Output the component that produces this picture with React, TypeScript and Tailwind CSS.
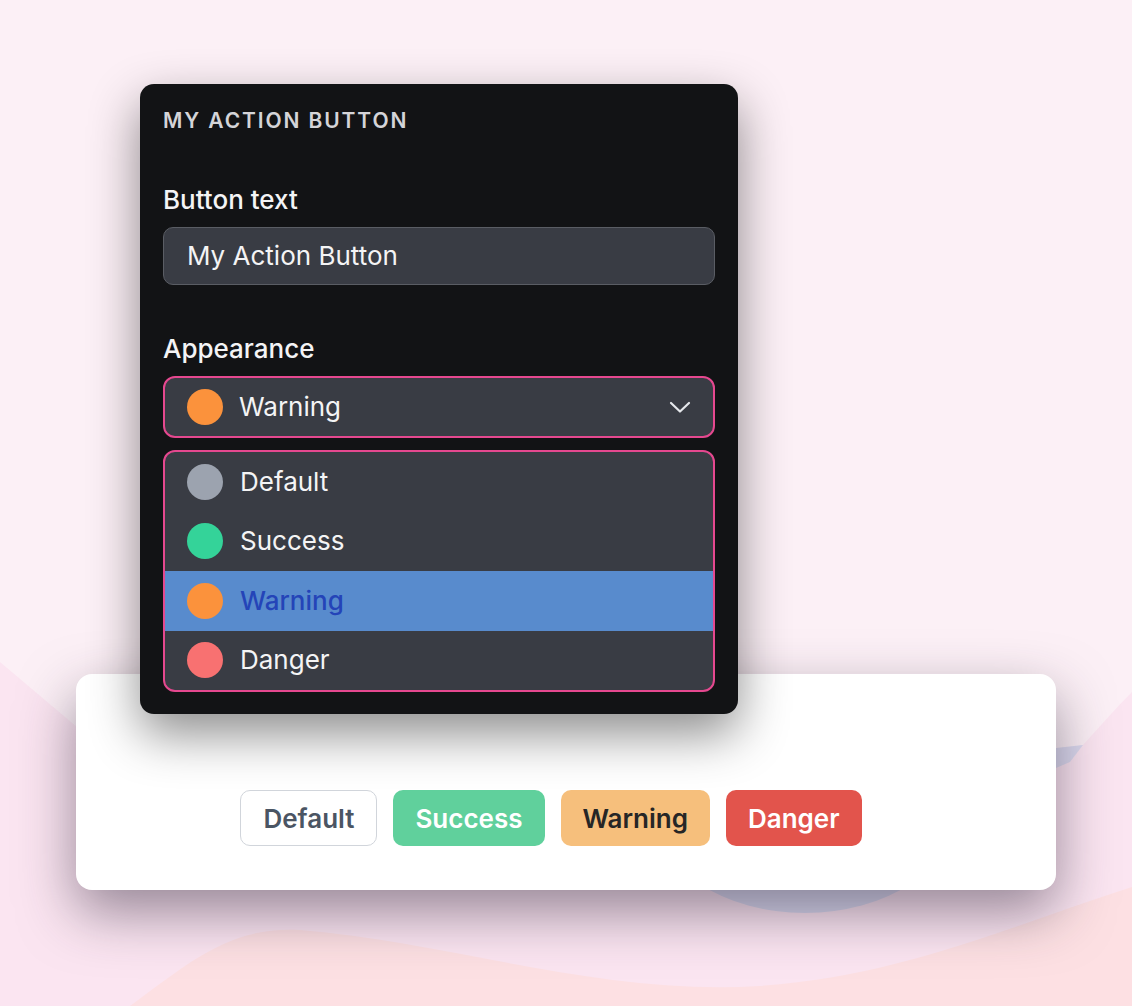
import React from 'react'

const font = { fontFamily: 'Inter, "Noto Sans", sans-serif' }

const options = [
  { label: 'Default', dot: 'bg-[#9ca3af]' },
  { label: 'Success', dot: 'bg-[#34d399]' },
  { label: 'Warning', dot: 'bg-[#fb923c]' },
  { label: 'Danger', dot: 'bg-[#f87171]' },
]

function Backdrop() {
  return (
    <svg className="absolute inset-0 h-full w-full" viewBox="0 0 1132 1006" preserveAspectRatio="none">
      <rect width="1132" height="1006" fill="#fcf0f6" />
      <path d="M0 662 L90 738 Q560 770 1000 762 L1083 745 C1100 726 1116 708 1132 692 V1006 H0 Z" fill="#fbe5f1" />
      <ellipse cx="805" cy="812" rx="150" ry="101" fill="#d9d9ef" />
      <path d="M1056 748 L1083 745 L1070 762 L1056 768 Z" fill="#dcdaef" />
      <path
        d="M130 1006 C190 962 230 926 300 930 C450 942 600 996 760 986 C900 976 1000 930 1132 887 V1006 Z"
        fill="#fde0e3"
      />
    </svg>
  )
}

function Chevron() {
  return (
    <svg width="22" height="13" viewBox="0 0 22 13" fill="none">
      <path d="M2 2 L11 10.5 L20 2" stroke="#e5e7eb" strokeWidth="2.2" strokeLinecap="round" strokeLinejoin="round" />
    </svg>
  )
}

function SettingsPanel() {
  return (
    <div className="absolute left-[64px] top-[-590px] z-10 flex h-[630px] w-[598px] flex-col rounded-[14px] bg-[#121315] px-[23px] pt-[23px] shadow-[0_20px_50px_rgba(0,0,0,0.45)]">
      <div className="text-[21px] font-semibold uppercase leading-[28px] tracking-[0.09em] text-[#d4d4d8]">
        My Action Button
      </div>

      <label className="mt-[49px] text-[26px] font-medium leading-[32px] text-[#f4f4f5]">Button text</label>
      <div className="mt-[11px] flex h-[58px] items-center rounded-[10px] border-[1.5px] border-[#5a5d64] bg-[#393c44] pl-[23px] text-[26px] leading-[32px] text-[#f4f4f5]">
        My Action Button
      </div>

      <label className="mt-[48px] text-[26px] font-medium leading-[32px] text-[#f4f4f5]">Appearance</label>
      <div className="mt-[11px] flex h-[62px] items-center rounded-[12px] border-2 border-[#e5488f] bg-[#393c44] pl-[22px] pr-[22px]">
        <span className="h-9 w-9 shrink-0 rounded-full bg-[#fb923c]" />
        <span className="ml-4 flex-1 text-[26px] leading-[32px] text-[#f4f4f5]">Warning</span>
        <Chevron />
      </div>

      <div className="mt-[12px] overflow-hidden rounded-[12px] border-2 border-[#e5488f] bg-[#393c44]">
        {options.map((o) => {
          const active = o.label === 'Warning'
          return (
            <div
              key={o.label}
              className={
                active
                  ? 'flex h-[59.5px] items-center bg-[#588bcd] pl-[22px]'
                  : 'flex h-[59.5px] items-center pl-[22px]'
              }
            >
              <span className={`h-9 w-9 shrink-0 rounded-full ${o.dot}`} />
              <span
                className={
                  active
                    ? 'ml-[17px] text-[26px] font-medium leading-[32px] text-[#2444b8]'
                    : 'ml-[17px] text-[26px] leading-[32px] text-[#f4f4f5]'
                }
              >
                {o.label}
              </span>
            </div>
          )
        })}
      </div>
    </div>
  )
}

export default function App() {
  return (
    <div className="relative h-[1006px] w-[1132px] overflow-hidden" style={font}>
      <Backdrop />
      <div className="relative pl-[76px] pt-[674px]">
        <div className="relative h-[216px] w-[980px] rounded-[16px] bg-white shadow-[0_22px_55px_rgba(50,40,60,0.5)]">
          <SettingsPanel />
          <div className="flex justify-center gap-[16px] pr-[30px] pt-[116px]">
            <button className="h-14 rounded-[10px] border border-[#d1d5db] bg-white px-[22px] text-[26px] font-semibold text-[#4b5563]">
              Default
            </button>
            <button className="h-14 rounded-[10px] bg-[#60d09c] px-[22px] text-[26px] font-semibold text-white">
              Success
            </button>
            <button className="h-14 rounded-[10px] bg-[#f6bf7c] px-[22px] text-[26px] font-semibold text-[#262626]">
              Warning
            </button>
            <button className="h-14 rounded-[10px] bg-[#e2544c] px-[22px] text-[26px] font-semibold text-white">
              Danger
            </button>
          </div>
        </div>
      </div>
    </div>
  )
}
